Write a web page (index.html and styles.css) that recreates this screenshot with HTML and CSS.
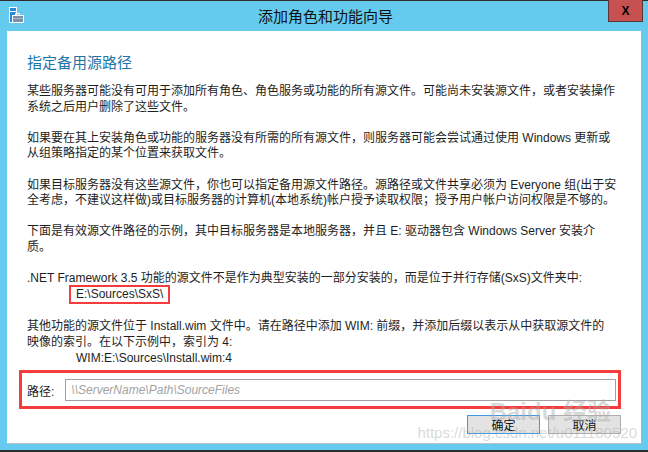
FILE: index.html
```html
<!DOCTYPE html>
<html lang="zh-CN">
<head>
  <meta charset="UTF-8">
  <meta name="viewport" content="width=device-width, initial-scale=1.0">
  <title>添加角色和功能向导</title>
  <link rel="stylesheet" href="styles.css">
</head>
<body>
  <div class="window">
    <div class="titlebar">
      <svg class="app-icon" width="16" height="16" viewBox="0 0 16 16">
        <rect x="1.5" y="0.5" width="7" height="15" fill="#2b8ad6" stroke="#fff"/>
        <line x1="1.5" y1="4.5" x2="8.5" y2="4.5" stroke="#fff"/>
        <path d="M7.5 8.5 V6.5 H11.5 V8.5" fill="none" stroke="#fff"/>
        <rect x="4.5" y="8.5" width="11" height="7" fill="#7d92a8" stroke="#fff"/>
        <line x1="5" y1="11.5" x2="15" y2="11.5" stroke="#a9b8c8"/>
      </svg>
      <div class="title">添加角色和功能向导</div>
      <button class="close-btn">X</button>
    </div>

    <div class="content">
      <h1 class="page-title">指定备用源路径</h1>

      <p>某些服务器可能没有可用于添加所有角色、角色服务或功能的所有源文件。可能尚未安装源文件，或者安装操作<br>系统之后用户删除了这些文件。</p>

      <p>如果要在其上安装角色或功能的服务器没有所需的所有源文件，则服务器可能会尝试通过使用 Windows 更新或<br>从组策略指定的某个位置来获取文件。</p>

      <p>如果目标服务器没有这些源文件，你也可以指定备用源文件路径。源路径或文件共享必须为 Everyone 组(出于安<br>全考虑，不建议这样做)或目标服务器的计算机(本地系统)帐户授予读取权限；授予用户帐户访问权限是不够的。</p>

      <p>下面是有效源文件路径的示例，其中目标服务器是本地服务器，并且 E: 驱动器包含 Windows Server 安装介<br>质。</p>

      <p>.NET Framework 3.5 功能的源文件不是作为典型安装的一部分安装的，而是位于并行存储(SxS)文件夹中:<br><span class="path-box">E:\Sources\SxS\</span></p>

      <p>其他功能的源文件位于 Install.wim 文件中。请在路径中添加 WIM: 前缀，并添加后缀以表示从中获取源文件的<br>映像的索引。在以下示例中，索引为 4:<br><span class="path-sample">WIM:E:\Sources\Install.wim:4</span></p>

      <div class="path-row">
        <label for="sourcePath">路径:</label>
        <input type="text" id="sourcePath" placeholder="\\ServerName\Path\SourceFiles">
      </div>

      <div class="actions">
        <button class="btn btn-default">确定</button>
        <button class="btn">取消</button>
      </div>

      <div class="watermark">
        <div class="watermark-logo">Bai<span class="paw">du</span> 经验</div>
        <div class="watermark-url">https://blog.csdn.net/u011180520</div>
      </div>
    </div>
    <div class="window-shadow"></div>
  </div>
</body>
</html>
```

FILE: styles.css
```css
body {
  margin: 0;
  font-family: "Liberation Sans", "Noto Sans CJK SC", sans-serif;
  font-size: 12px;
  color: #1e1e1e;
}

.window {
  width: 648px;
  height: 452px;
  box-sizing: border-box;
  background: #64cbef;
  border-top: 1px solid #2d2d2d;
  border-bottom: 2px solid #2d2d2d;
  display: flex;
  flex-direction: column;
}

.titlebar {
  height: 30px;
  display: grid;
  grid-template-columns: 1fr auto 1fr;
  align-items: start;
  padding: 0 5px 0 8px;
}

.app-icon {
  margin-top: 6px;
}

.title {
  font-family: "Noto Sans CJK SC", sans-serif;
  font-size: 15px;
  line-height: 20px;
  margin-top: 5px;
  color: #111;
}

.close-btn {
  justify-self: end;
  margin-top: -1px;
  width: 35px;
  height: 22px;
  padding: 0;
  background: #c75050;
  border: 1px solid #5b3434;
  border-top: none;
  color: #000;
  font-family: "Liberation Sans", sans-serif;
  font-weight: bold;
  font-size: 12px;
  line-height: 20px;
}

.content {
  position: relative;
  height: 412px;
  margin: 0 7px;
  box-sizing: border-box;
  background: #fff;
  padding: 21px 20px 0 20px;
}

.window-shadow {
  height: 1px;
  margin: 0 7px;
  background: #b9c3c8;
}

.page-title {
  margin: 0 0 12px 0;
  font-family: "Noto Sans CJK SC", sans-serif;
  font-size: 15px;
  line-height: 20px;
  font-weight: normal;
  color: #1f74a8;
}

p {
  margin: 0 0 15.6px 0;
  line-height: 15.6px;
  white-space: nowrap;
}

.path-box {
  display: inline-block;
  margin: -3px 0 0 42px;
  padding: 0 5px 0 5px;
  border: 2px solid #f53c3c;
  line-height: 15px;
}

.path-sample {
  display: inline-block;
  margin-left: 49px;
}

.path-row {
  display: flex;
  align-items: center;
  gap: 11px;
  margin: -12px 0 0 -8px;
  height: 39px;
  box-sizing: border-box;
  border: 3px solid #f53c3c;
  padding: 2px 2px 0 5px;
}

.path-row label {
  white-space: nowrap;
}

.path-row input {
  flex: 1;
  height: 22px;
  box-sizing: border-box;
  border: 1px solid #a0a0a0;
  padding: 0 5px;
  font-family: "Liberation Sans", "Noto Sans CJK SC", sans-serif;
  font-size: 12px;
  outline: none;
}

.path-row input::placeholder {
  color: #a2a2a2;
  font-style: italic;
}

.actions {
  display: flex;
  justify-content: flex-end;
  gap: 8px;
  margin-top: 6px;
}

.btn {
  width: 73px;
  height: 19px;
  padding: 0;
  background: #e3e3e3;
  border: 1px solid #adadad;
  font-family: "Noto Sans CJK SC", sans-serif;
  font-size: 12px;
  line-height: 17px;
  color: #111;
}

.btn-default {
  border-color: #3c99e8;
}

/* 图片水印 */
.watermark {
  position: absolute;
  right: 4px;
  bottom: 2px;
  text-align: right;
  color: rgba(170, 170, 170, 0.45);
  pointer-events: none;
}

.watermark-logo {
  font-family: "Liberation Sans", "Noto Sans CJK SC", sans-serif;
  font-size: 24px;
  font-weight: bold;
  line-height: 26px;
  margin-right: 26px;
}

.watermark-url {
  font-family: "Liberation Sans", sans-serif;
  font-size: 15px;
  line-height: 16px;
}
```
